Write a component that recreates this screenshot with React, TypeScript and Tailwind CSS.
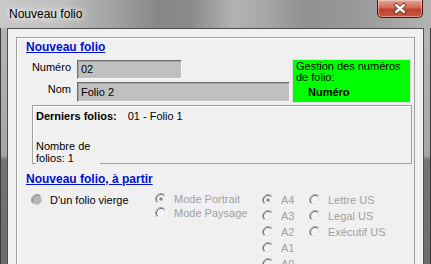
import React from "react";

type RadioState = "off" | "on" | "gray";

function Radio({ state }: { state: RadioState }) {
  const c =
    state === "gray"
      ? { fill: "#b6b6b6", oTL: "#9a9a9a", oBR: "#ececec", iTL: "#8a8a8a", iBR: "#c8c8c8" }
      : { fill: "#f4f4f4", oTL: "#a8a8a8", oBR: "#ffffff", iTL: "#6e6e6e", iBR: "#e2e2e2" };
  return (
    <svg width="12" height="12" viewBox="0 0 12 12" className="shrink-0">
      <circle cx="6" cy="6" r="4.5" fill={c.fill} />
      <path d="M2.11 9.89 A5.5 5.5 0 0 1 9.89 2.11" fill="none" stroke={c.oTL} />
      <path d="M9.89 2.11 A5.5 5.5 0 0 1 2.11 9.89" fill="none" stroke={c.oBR} />
      <path d="M2.82 9.18 A4.5 4.5 0 0 1 9.18 2.82" fill="none" stroke={c.iTL} />
      <path d="M9.18 2.82 A4.5 4.5 0 0 1 2.82 9.18" fill="none" stroke={c.iBR} />
      {state === "on" && <circle cx="6" cy="6" r="1.8" fill="#8c8c8c" />}
    </svg>
  );
}

function Option({
  label,
  state,
  disabled = true,
  h = "h-[16px]",
}: {
  label: string;
  state: RadioState;
  disabled?: boolean;
  h?: string;
}) {
  return (
    <div className={`flex items-center gap-[7px] ${h}`}>
      <Radio state={state} />
      <span className={disabled ? "text-[#a0a0a0]" : "text-black"}>{label}</span>
    </div>
  );
}

function Field({ label, value, w, h }: { label: string; value: string; w: string; h: string }) {
  return (
    <div className="flex items-start gap-[6px]">
      <span className="w-[54px] pt-[1px] text-right">{label}</span>
      <div
        className={`${w} ${h} flex items-center border-t border-l border-[#6d6d6d] border-b border-r border-b-[#fafafa] border-r-[#fafafa] bg-[#c0c0c0] pl-[3px] shadow-[inset_1px_1px_0_#a4a4a4]`}
      >
        {value}
      </div>
    </div>
  );
}

export default function App() {
  return (
    <div className="w-[431px] h-[264px] overflow-hidden bg-[#f0f0f0] font-['Liberation_Sans',Arial,sans-serif] text-[11px] leading-[13px] text-black">
      {/* title bar */}
      <div className="h-[28px] flex items-start bg-[linear-gradient(90deg,#c8c8c8_0%,#bfbfbf_14%,#a0a0a0_27%,#878787_37%,#8a8a8a_44%,#b2b2b2_54%,#a8a8a8_61%,#909090_71%,#9a9a9a_84%,#b2b2b2_100%)]">
        <span className="ml-[9px] mt-[7px] text-[12px] leading-[14px] [text-shadow:0_0_6px_#ffffff,0_0_10px_#ffffff]">
          Nouveau folio
        </span>
        <div className="ml-auto mr-[8px] w-[46px] h-[18px] flex items-center justify-center rounded-b-[5px] border border-t-0 border-[#4a1a14] bg-[linear-gradient(180deg,#e8a494_0%,#d46a58_45%,#c0402c_55%,#c85a40_100%)] shadow-[inset_0_0_0_1px_rgba(255,255,255,0.35)]">
          <svg width="14" height="11" viewBox="0 0 14 11">
            <path d="M3 2 L11 9 M11 2 L3 9" stroke="#5a2a22" strokeWidth="4" strokeLinecap="round" />
            <path d="M3 2 L11 9 M11 2 L3 9" stroke="#ffffff" strokeWidth="2.4" strokeLinecap="round" />
          </svg>
        </div>
      </div>

      {/* body */}
      <div className="flex h-[236px]">
        <div className="w-[7px] border-l border-[#3c3c3c] bg-[linear-gradient(180deg,#b4b4b4_0%,#a6a6a6_54%,#747474_56%,#6c6c6c_100%)]" />
        <div className="w-[417px] border-t border-l border-r border-[#4e4e4e] bg-[#f0f0f0] pl-[8px] pr-[8px] pt-[8px]">
          {/* panel */}
          <div className="h-[240px] border border-[#a0a0a0] shadow-[inset_1px_1px_0_#ffffff] flex flex-col">
            <div className="pl-[9px] mt-[2px] text-[12px] leading-[14px] font-bold text-[#0010d0] underline">
              Nouveau folio
            </div>

            <div className="flex items-start mt-[5px]">
              <div className="flex flex-col pt-[1px] gap-[3px]">
                <Field label="Numéro" value="02" w="w-[105px]" h="h-[19px]" />
                <Field label="Nom" value="Folio 2" w="w-[213px]" h="h-[20px]" />
              </div>
              <div className="ml-[2px] w-[119px] h-[44px] border border-[#dedede] bg-[#00ff00] pl-[3px] leading-[11px] pt-[1px]">
                <div>Gestion des numéros</div>
                <div>de folio:</div>
                <div className="pl-[12px] mt-[4px] font-bold">Numéro</div>
              </div>
            </div>

            <div className="ml-[15px] mr-[2px] mt-[2px] h-[59px] border border-[#a0a0a0] shadow-[inset_1px_1px_0_#ffffff] flex flex-col pl-[3px] pt-[4px]">
              <div className="flex">
                <span className="font-bold">Derniers folios:</span>
                <span className="ml-[11px]">01 - Folio 1</span>
              </div>
              <div className="mt-auto relative top-[1px] w-[64px] bg-[#f0f0f0] leading-[12px]">
                Nombre de
                <br />
                folios: 1
              </div>
            </div>

            <div className="pl-[9px] mt-[8px] text-[12px] leading-[14px] font-bold text-[#0010d0] underline">
              Nouveau folio, à partir
            </div>

            <div className="flex mt-[6px] pl-[14px]">
              <div className="w-[124px]">
                <Option label="D'un folio vierge" state="gray" disabled={false} />
              </div>
              <div className="w-[107px] flex flex-col">
                <Option label="Mode Portrait" state="on" h="h-[14px]" />
                <Option label="Mode Paysage" state="off" h="h-[14px]" />
              </div>
              <div className="w-[47px] flex flex-col">
                <Option label="A4" state="on" />
                <Option label="A3" state="off" />
                <Option label="A2" state="off" />
                <Option label="A1" state="off" />
                <Option label="A0" state="off" />
              </div>
              <div className="flex flex-col">
                <Option label="Lettre US" state="off" />
                <Option label="Legal US" state="off" />
                <Option label="Exécutif US" state="off" />
              </div>
            </div>
          </div>
        </div>
        <div className="w-[7px] border-r border-[#3c3c3c] bg-[linear-gradient(180deg,#b4b4b4_0%,#a6a6a6_54%,#747474_56%,#6c6c6c_100%)]" />
      </div>
    </div>
  );
}
